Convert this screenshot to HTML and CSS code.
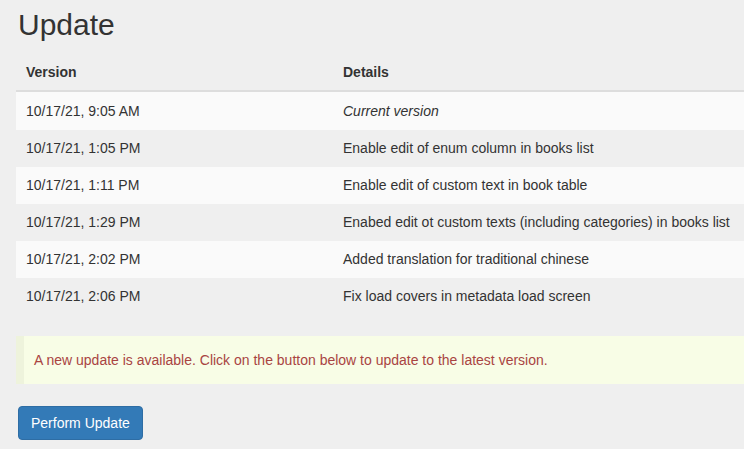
FILE: index.html
```html
<!DOCTYPE html>
<html>
<head>
<meta charset="utf-8">
<link rel="stylesheet" href="styles.css">
</head>
<body>
<div class="page">
  <h2 class="title">Update</h2>
  <table class="versions">
    <thead>
      <tr><th class="col-version">Version</th><th>Details</th></tr>
    </thead>
    <tbody>
      <tr><td>10/17/21, 9:05 AM</td><td><em>Current version</em></td></tr>
      <tr><td>10/17/21, 1:05 PM</td><td>Enable edit of enum column in books list</td></tr>
      <tr><td>10/17/21, 1:11 PM</td><td>Enable edit of custom text in book table</td></tr>
      <tr><td>10/17/21, 1:29 PM</td><td>Enabed edit ot custom texts (including categories) in books list</td></tr>
      <tr><td>10/17/21, 2:02 PM</td><td>Added translation for traditional chinese</td></tr>
      <tr><td>10/17/21, 2:06 PM</td><td>Fix load covers in metadata load screen</td></tr>
    </tbody>
  </table>
  <div class="alert">A new update is available. Click on the button below to update to the latest version.</div>
  <button class="btn">Perform Update</button>
</div>
</body>
</html>
```
FILE: styles.css
```css
html, body {
  margin: 0;
  padding: 0;
  background: #efefef;
  overflow: hidden;
}
body {
  font-family: "Liberation Sans", Arial, sans-serif;
  font-size: 14px;
  line-height: 20px;
  color: #333;
}
.page {
  padding: 0 0 0 16px;
}
.title {
  font-size: 30px;
  font-weight: normal;
  line-height: 33px;
  margin: 8px 0 13px 2px;
  color: #333;
}
.versions {
  width: 100%;
  border-collapse: collapse;
  border-spacing: 0;
  margin-bottom: 22px;
  white-space: nowrap;
}
.versions th {
  text-align: left;
  font-weight: bold;
  padding: 8px;
  border-bottom: 2px solid #dddddd;
}
.versions th:first-child,
.versions td:first-child {
  padding-left: 10px;
}
.versions .col-version {
  width: 301px;
}
.versions td {
  padding: 8px;
  border-top: 1px solid transparent;
}
.versions tbody tr:nth-child(odd) {
  background: #fafafa;
}
.versions tbody tr:first-child td {
  border-top: 0;
  padding-top: 9px;
}
.alert {
  background: #f8fde6;
  border-left: 8px solid #eef3dc;
  color: #a94442;
  padding: 14px 10px;
  margin-bottom: 22px;
}
.btn {
  font-family: "Liberation Sans", Arial, sans-serif;
  font-size: 14px;
  line-height: 20px;
  color: #fff;
  background: #337ab7;
  border: 1px solid #2e6da4;
  border-radius: 4px;
  padding: 6px 12px;
  margin-left: 2px;
  cursor: pointer;
}
```
